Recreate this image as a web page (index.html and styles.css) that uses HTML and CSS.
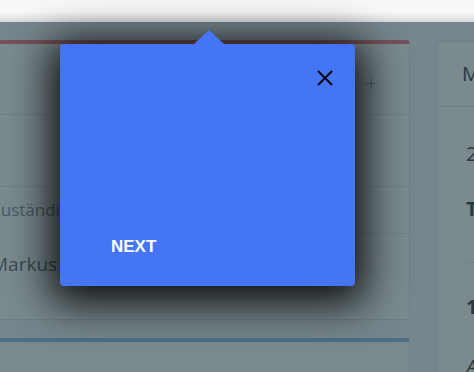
FILE: index.html
```html
<!DOCTYPE html>
<html lang="de">
<head>
<meta charset="utf-8">
<title>Projekt – Tour</title>
<link rel="stylesheet" href="styles.css">
</head>
<body>
<header class="topbar"></header>
<main class="board">
  <div class="main-col">
    <section class="card card-red">
      <div class="card-head">
        <span class="add">+</span>
      </div>
      <div class="card-row"></div>
      <div class="details">
        <div class="detail-main">
          <div class="label">Zuständig</div>
          <div class="value">Markus Weber</div>
        </div>
        <div class="detail-side"><div class="side-line"></div></div>
      </div>
    </section>
    <section class="card card-blue">
      <div class="card-head"></div>
    </section>
  </div>
  <aside class="card side-card">
    <div class="side-head">Meilensteine</div>
    <div class="side-body">
      <div class="side-block">
        <div class="side-num">2 offen</div>
        <div class="side-strong side-gap">Termine</div>
      </div>
      <div class="side-block2">
        <div class="side-strong">12.06.2024</div>
        <div class="side-em">Abgeschlossen</div>
      </div>
    </div>
  </aside>
</main>
<div class="backdrop"></div>
<div class="tour-pop">
  <button class="tour-close" aria-label="Schließen">
    <svg width="24" height="24" viewBox="0 0 24 24" aria-hidden="true">
      <path d="M5 5 L19 19 M19 5 L5 19" stroke="#000" stroke-width="1.8" fill="none"/>
    </svg>
  </button>
  <div class="tour-footer">
    <button class="tour-next">NEXT</button>
  </div>
</div>
</body>
</html>
```

FILE: styles.css
```css
html, body {
  margin: 0;
  padding: 0;
}

body {
  width: 474px;
  height: 372px;
  overflow: hidden;
  position: relative;
  background: #f4f5f6;
  font-family: "Open Sans", "Noto Sans", sans-serif;
  color: #333;
}

.topbar {
  position: relative;
  z-index: 2;
  height: 22px;
  background: linear-gradient(to bottom, #f8f8f8 0, #f8f8f8 55%, #d8dadb 100%);
}

.board {
  display: grid;
  grid-template-columns: 450px 280px;
  column-gap: 26px;
  align-items: start;
  margin-left: -40px;
  padding-top: 18px;
}

.main-col {
  display: flex;
  flex-direction: column;
  gap: 18px;
}

.card {
  background: #fff;
  border: 1px solid #dfe2e5;
  border-radius: 4px;
}

.card-red {
  border-top: 4px solid #f26a72;
}

.card-blue {
  border-top: 4px solid #7fb6e4;
}

.card-head {
  height: 71px;
  box-sizing: border-box;
  display: flex;
  justify-content: flex-end;
  align-items: flex-start;
  padding: 23px 31px 0 30px;
  border-bottom: 1px solid #e3e6e9;
}

.add {
  font-size: 24px;
  font-weight: 300;
  line-height: 32px;
  color: #8f959a;
}

.card-row {
  height: 71px;
  border-bottom: 1px solid #e3e6e9;
}

.details {
  display: grid;
  grid-template-columns: 270px 1fr;
}

.detail-main {
  padding: 11px 0 42px 30px;
}

.label {
  font-size: 17px;
  line-height: 23px;
  color: #7a7f85;
  white-space: nowrap;
}

.value {
  margin-top: 30px;
  font-size: 19px;
  line-height: 26px;
  color: #565a60;
  white-space: nowrap;
}

.side-line {
  height: 46px;
  border-bottom: 1px solid #e3e6e9;
}

.side-card {
  margin-top: 1px;
  height: 420px;
}

.side-head {
  padding: 18px 20px 18px 25px;
  font-size: 20px;
  line-height: 28px;
  color: #2b2b2b;
  border-bottom: 1px solid #e3e6e9;
}

.side-body {
  padding-left: 29px;
}

.side-block {
  padding: 33px 0 39px;
  border-bottom: 1px solid #e3e6e9;
}

.side-block2 {
  padding-top: 30px;
}

.side-num,
.side-strong,
.side-em {
  font-size: 20px;
  line-height: 28px;
  color: #2b2b2b;
}

.side-strong {
  font-weight: 700;
}

.side-gap {
  margin-top: 27px;
}

.side-em {
  margin-top: 32px;
  font-style: italic;
}

.backdrop {
  position: absolute;
  top: 22px;
  left: 0;
  right: 0;
  bottom: 0;
  z-index: 1;
  background: rgba(40, 66, 74, 0.62);
}

.tour-pop {
  position: absolute;
  left: 60px;
  top: 44px;
  width: 295px;
  height: 242px;
  z-index: 3;
  box-sizing: border-box;
  display: flex;
  flex-direction: column;
  background: #4475f5;
  border-radius: 4px;
  box-shadow: 0 8px 42px 10px rgba(0, 0, 0, 0.9);
}

.tour-pop::before {
  content: "";
  position: absolute;
  top: -14px;
  left: 134px;
  border-left: 15px solid transparent;
  border-right: 15px solid transparent;
  border-bottom: 14px solid #4475f5;
}

.tour-close {
  align-self: flex-end;
  width: 24px;
  height: 24px;
  margin: 22px 18px 0 0;
  padding: 0;
  border: 0;
  background: transparent;
  cursor: pointer;
}

.tour-close svg {
  display: block;
}

.tour-footer {
  margin-top: auto;
  padding: 0 0 21px 35px;
}

.tour-next {
  padding: 8px 16px;
  border: 0;
  background: transparent;
  color: #fff;
  font-family: "Liberation Sans", Arial, sans-serif;
  font-size: 17px;
  font-weight: 700;
  line-height: 20px;
  cursor: pointer;
}
```
